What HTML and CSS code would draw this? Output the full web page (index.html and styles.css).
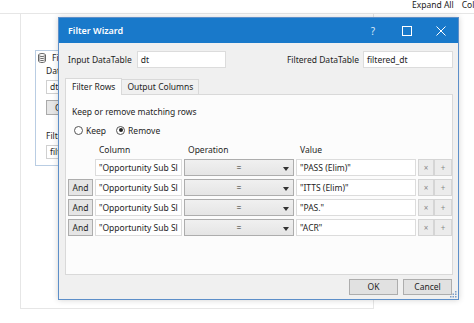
FILE: index.html
```html
<!DOCTYPE html>
<html>
<head>
<meta charset="utf-8">
<link rel="stylesheet" href="styles.css">
</head>
<body>
<div class="app">
  <div class="toolbar"><span>Expand All</span><span>Collapse All</span></div>
  <div class="canvas">
    <div class="activity">
      <div class="act-head">
        <svg class="db" width="8" height="10" viewBox="0 0 8 10"><ellipse cx="4" cy="2" rx="3.5" ry="1.5" fill="#fff" stroke="#666"/><path d="M0.5 2v6c0 .8 1.6 1.5 3.5 1.5S7.5 8.8 7.5 8V2M0.5 4c0 .8 1.6 1.5 3.5 1.5S7.5 4.8 7.5 4M0.5 6c0 .8 1.6 1.5 3.5 1.5S7.5 6.8 7.5 6" fill="none" stroke="#666"/></svg>
        <span>Filter Data Table</span>
      </div>
      <div class="act-label">DataTable</div>
      <div class="act-input">dt</div>
      <div class="act-btn">Configure Filter</div>
      <div class="act-label">Filtered DataTable</div>
      <div class="act-input">filtered_dt</div>
    </div>
  </div>
</div>

<div class="dialog">
  <div class="titlebar">
    <span class="title">Filter Wizard</span>
    <span class="tb-btns">
      <span class="tb-help">?</span>
      <span class="tb-max"></span>
      <span class="tb-close">
        <svg width="10" height="10" viewBox="0 0 10 10"><path d="M0.5 0.5l9 9M9.5 0.5l-9 9" stroke="#fff" stroke-width="1"/></svg>
      </span>
    </span>
  </div>
  <div class="body">
    <div class="io-row">
      <label class="lbl">Input DataTable</label>
      <div class="field in-dt">dt</div>
      <label class="lbl lbl-out">Filtered DataTable</label>
      <div class="field out-dt">filtered_dt</div>
    </div>
    <div class="tabs">
      <div class="tab active">Filter Rows</div>
      <div class="tab">Output Columns</div>
    </div>
    <div class="panel">
      <div class="hint">Keep or remove matching rows</div>
      <div class="radios">
        <span class="radio"><span class="dot"></span>Keep</span>
        <span class="radio"><span class="dot on"></span>Remove</span>
      </div>
      <div class="grid">
        <span></span><span class="hdr">Column</span><span class="hdr">Operation</span><span class="hdr">Value</span><span></span><span></span>

        <span></span>
        <div class="field">"Opportunity Sub Sl</div>
        <div class="select"><span>=</span><i class="arrow"></i></div>
        <div class="field">"PASS (Elim)"</div>
        <div class="mini">×</div><div class="mini">+</div>

        <div class="and">And</div>
        <div class="field">"Opportunity Sub Sl</div>
        <div class="select"><span>=</span><i class="arrow"></i></div>
        <div class="field">"ITTS (Elim)"</div>
        <div class="mini">×</div><div class="mini">+</div>

        <div class="and">And</div>
        <div class="field">"Opportunity Sub Sl</div>
        <div class="select"><span>=</span><i class="arrow"></i></div>
        <div class="field">"PAS."</div>
        <div class="mini">×</div><div class="mini">+</div>

        <div class="and">And</div>
        <div class="field">"Opportunity Sub Sl</div>
        <div class="select"><span>=</span><i class="arrow"></i></div>
        <div class="field">"ACR"</div>
        <div class="mini">×</div><div class="mini">+</div>
      </div>
    </div>
    <div class="footer">
      <div class="btn">OK</div>
      <div class="btn">Cancel</div>
      <svg class="grip" width="7" height="7" viewBox="0 0 7 7"><g fill="#7a9cc6"><rect x="5" y="0" width="1.5" height="1.5"/><rect x="2.5" y="2.5" width="1.5" height="1.5"/><rect x="5" y="2.5" width="1.5" height="1.5"/><rect x="0" y="5" width="1.5" height="1.5"/><rect x="2.5" y="5" width="1.5" height="1.5"/><rect x="5" y="5" width="1.5" height="1.5"/></g></svg>
    </div>
  </div>
</div>
</body>
</html>
```
FILE: styles.css
```css
* { box-sizing: border-box; }
html, body { margin: 0; padding: 0; }
body {
  width: 474px; height: 323px; overflow: hidden; position: relative;
  background: #fff;
  font-family: "Noto Sans", "Open Sans", sans-serif;
  font-size: 8.5px; color: #1e1e1e;
}
.app { width: 474px; }
.toolbar {
  height: 14px; border-bottom: 1px solid #e6e6e6;
  display: flex; justify-content: flex-start; gap: 8px;
  padding-left: 412px; white-space: nowrap; overflow: hidden;
  font-size: 8.5px; line-height: 10px; color: #222;
}
.canvas {
  margin-left: 20px; width: 354px; height: 295px;
  border: 1px solid #e6e6e6; border-top: none;
  padding: 36px 0 0 14px;
}
.activity {
  width: 24px; height: 116px; border: 1px solid #b9cde3; border-right: none; background: #fff;
  padding: 1px 0 0 10px; overflow: hidden; white-space: nowrap;
}
.act-head { display: flex; align-items: center; gap: 6px; height: 11px; margin-left: -8px; }
.act-head > * { flex: none; }
.act-label { margin-top: 3px; height: 10px; line-height: 10px; }
.act-input { margin-top: 4px; width: 80px; height: 14px; border: 1px solid #d0d0d0; padding-left: 3px; line-height: 12px; }
.act-btn { margin-top: 6px; width: 80px; height: 15px; border: 1px solid #aaa; background: #e6e6e6; text-align: center; line-height: 13px; }
.act-btn + .act-label { margin-top: 16px; }

.dialog {
  position: absolute; left: 58px; top: 17px; width: 401px; height: 283px;
  border: 1px solid #5d8fc9; background: #f0f0f0;
  box-shadow: 0 0 6px rgba(0,0,0,0.18);
  display: flex; flex-direction: column;
}
.titlebar {
  height: 25px; background: #1979ca; color: #fff;
  display: flex; align-items: center; justify-content: space-between;
  padding-left: 9px; flex: none;
}
.title { font-size: 9px; font-weight: 600; }
.tb-btns { display: flex; align-items: center; height: 100%; }
.tb-btns > span { width: 34px; display: flex; justify-content: center; align-items: center; }
.tb-help { font-size: 10px; color: #dce9f6; }
.tb-max::before { content: ""; width: 8px; height: 8px; border: 1px solid #fff; display: block; }
.body { flex: 1; display: flex; flex-direction: column; padding: 8px 5px 0 6px; }
.io-row { display: flex; align-items: center; height: 17px; padding-left: 3px; }
.lbl { white-space: nowrap; }
.field {
  background: #fff; border: 1px solid #dcdcdc; height: 17px; line-height: 15px;
  padding-left: 3px; white-space: nowrap; overflow: hidden;
}
.in-dt { width: 89px; margin-left: 5px; }
.lbl-out { margin-left: auto; }
.out-dt { width: 90px; margin-left: 4px; }
.tabs { display: flex; margin-top: 9px; align-items: flex-end; height: 17px; }
.tab {
  height: 15px; line-height: 13px; padding: 0 5px; border: 1px solid #d9d9d9; border-bottom: none;
  background: #f0f0f0; white-space: nowrap;
}
.tab.active { height: 17px; line-height: 15px; background: #fcfcfc; position: relative; top: 1px; padding: 0 6px; }
.tab + .tab { border-left: none; }
.panel {
  height: 181px; border: 1px solid #d9d9d9; background: #fcfcfc;
  padding: 12px 0 0 2px;
}
.hint { padding-left: 4px; line-height: 10px; }
.radios { display: flex; gap: 10px; margin-top: 8px; padding-left: 6px; height: 10px; align-items: center; }
.radio { display: flex; align-items: center; gap: 3px; }
.dot { width: 9px; height: 9px; border: 1px solid #555; border-radius: 50%; background: #fff; display: flex; align-items: center; justify-content: center; }
.dot.on::after { content: ""; width: 4px; height: 4px; border-radius: 50%; background: #222; }
.grid {
  display: grid; margin-top: 9px;
  grid-template-columns: 25px 87px 110px 120px 16px 16px;
  column-gap: 2px; row-gap: 3px; align-items: center;
}
.grid .mini + .mini { margin-left: -2px; }
.hdr { padding-left: 4px; height: 12px; line-height: 12px; }
.grid .field { height: 17px; }
.select {
  height: 17px; border: 1px solid #adadad; background: linear-gradient(#f0f0f0, #e5e5e5);
  display: flex; align-items: center; justify-content: center; position: relative;
}
.arrow { position: absolute; right: 4px; top: 7px; width: 0; height: 0; border-left: 3px solid transparent; border-right: 3px solid transparent; border-top: 4px solid #333; }
.and {
  height: 17px; border: 1px solid #adadad; background: #e5e5e5;
  text-align: center; line-height: 15px;
}
.mini {
  height: 17px; border: 1px solid #d5d5d5; background: #ececec; color: #8a8a8a;
  text-align: center; line-height: 15px; font-size: 8px;
}
.footer { flex: 1; display: flex; align-items: center; justify-content: flex-end; gap: 5px; padding-right: 1px; position: relative; }
.btn {
  width: 49px; height: 16px; border: 1px solid #adadad; background: #e1e1e1;
  text-align: center; line-height: 14px;
}
.grip { position: absolute; right: -4px; bottom: 1px; }
```
